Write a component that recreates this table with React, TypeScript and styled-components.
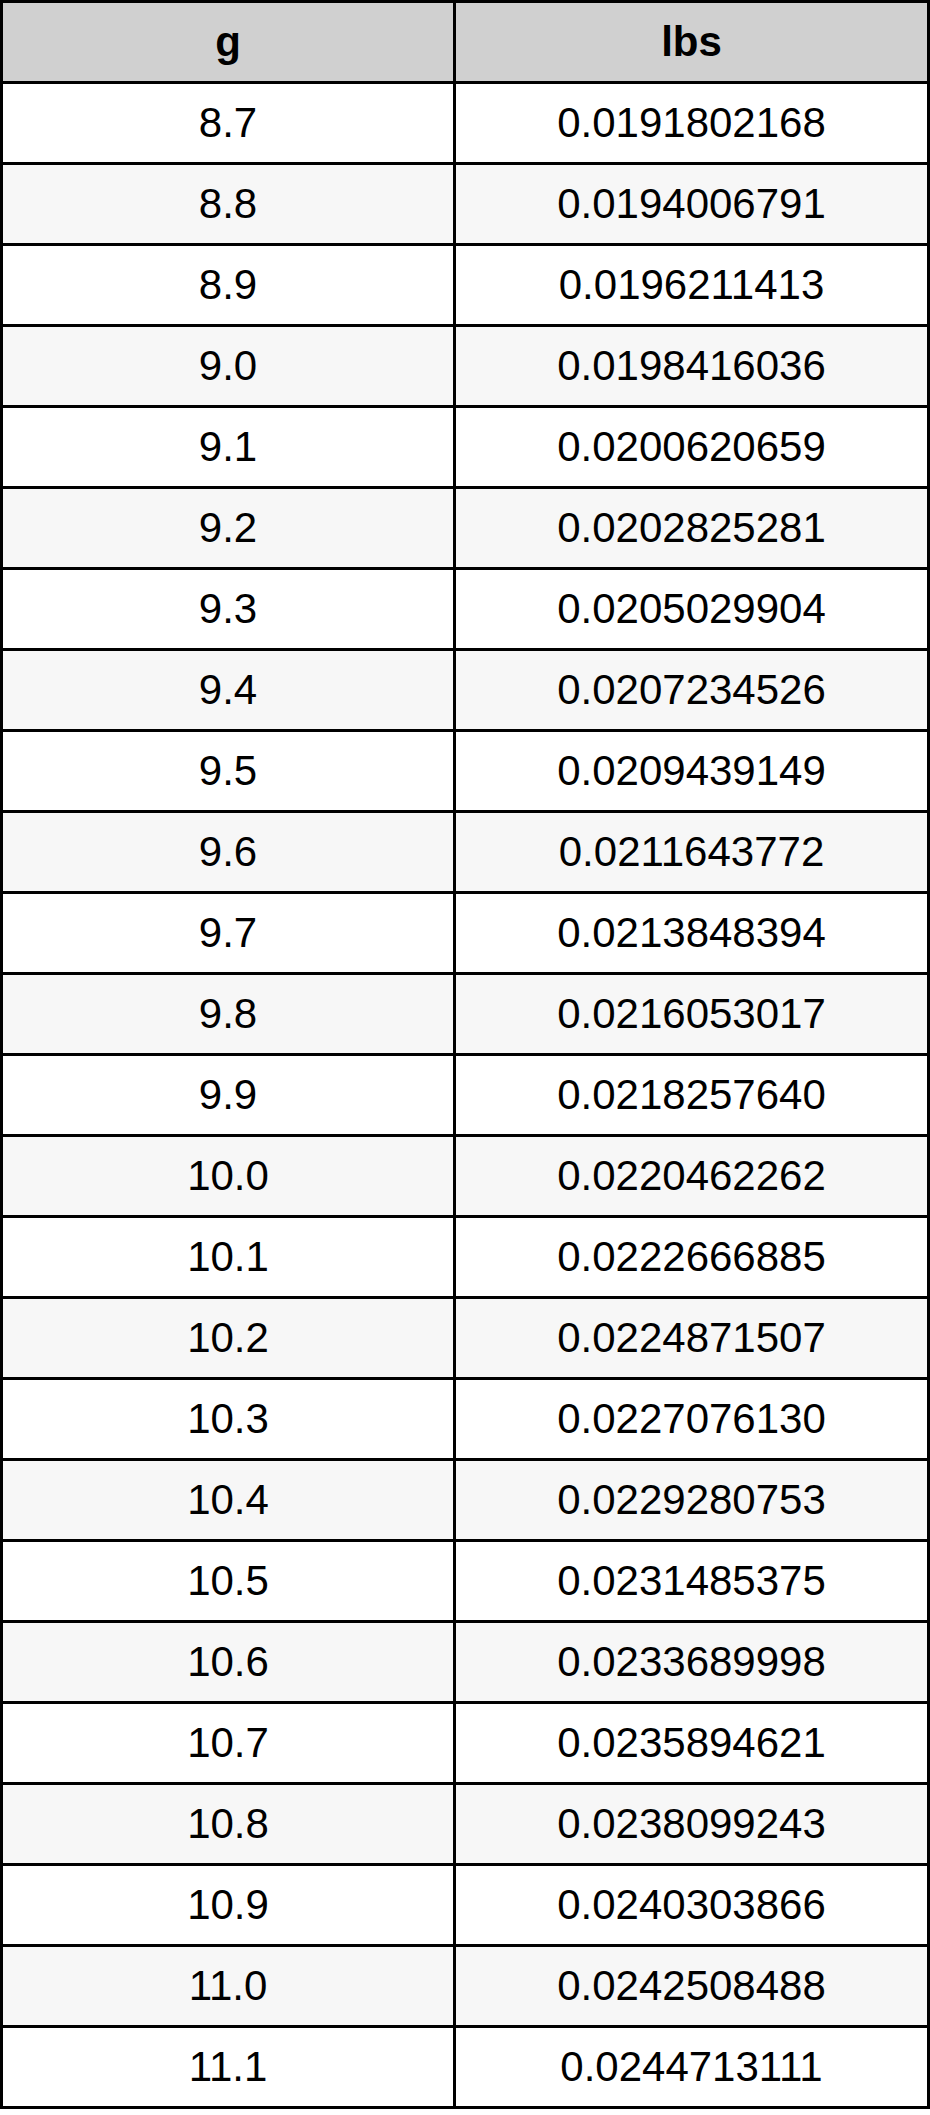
import React from 'react';
import styled, { createGlobalStyle } from 'styled-components';

const GlobalStyle = createGlobalStyle`
  html, body {
    margin: 0;
    padding: 0;
    background: #fff;
  }
`;

const rows: [string, string][] = [
  ['8.7', '0.0191802168'],
  ['8.8', '0.0194006791'],
  ['8.9', '0.0196211413'],
  ['9.0', '0.0198416036'],
  ['9.1', '0.0200620659'],
  ['9.2', '0.0202825281'],
  ['9.3', '0.0205029904'],
  ['9.4', '0.0207234526'],
  ['9.5', '0.0209439149'],
  ['9.6', '0.0211643772'],
  ['9.7', '0.0213848394'],
  ['9.8', '0.0216053017'],
  ['9.9', '0.0218257640'],
  ['10.0', '0.0220462262'],
  ['10.1', '0.0222666885'],
  ['10.2', '0.0224871507'],
  ['10.3', '0.0227076130'],
  ['10.4', '0.0229280753'],
  ['10.5', '0.0231485375'],
  ['10.6', '0.0233689998'],
  ['10.7', '0.0235894621'],
  ['10.8', '0.0238099243'],
  ['10.9', '0.0240303866'],
  ['11.0', '0.0242508488'],
  ['11.1', '0.0244713111'],
];

function App() {
  return (
    <>
      <GlobalStyle />
      <Table>
        <HeadCell>g</HeadCell>
        <HeadCell>lbs</HeadCell>
        {rows.map(([g, lbs], i) => (
          <React.Fragment key={g}>
            <Cell $shaded={i % 2 === 1}>{g}</Cell>
            <Cell $shaded={i % 2 === 1}>{lbs}</Cell>
          </React.Fragment>
        ))}
      </Table>
    </>
  );
}

export default App;

const Table = styled.div`
  display: grid;
  grid-template-columns: 450px 471px;
  grid-auto-rows: 78px;
  gap: 3px;
  padding: 3px;
  width: 930px;
  box-sizing: border-box;
  background: #000;
  font-family: "Liberation Sans", Arial, sans-serif;
  font-size: 42px;
  color: #000;
`;

const HeadCell = styled.div`
  display: flex;
  align-items: center;
  justify-content: center;
  background: #d0d0d0;
  font-weight: bold;
`;

const Cell = styled.div<{ $shaded: boolean }>`
  display: flex;
  align-items: center;
  justify-content: center;
  background: ${(p) => (p.$shaded ? '#f7f7f7' : '#fff')};
`;
